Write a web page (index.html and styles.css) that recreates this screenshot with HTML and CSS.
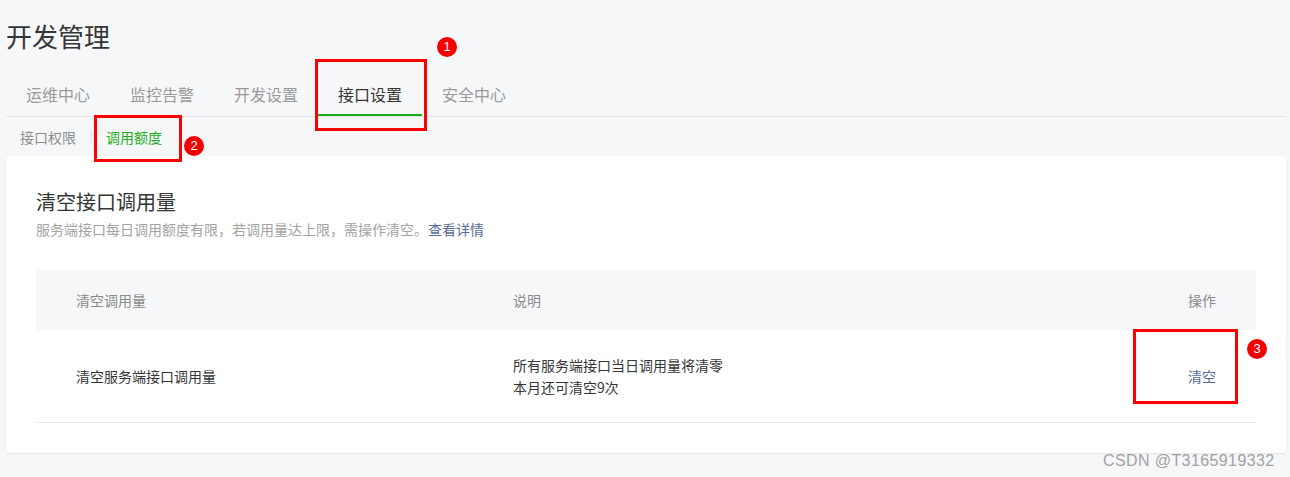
FILE: index.html
```html
<!DOCTYPE html>
<html lang="zh-CN">
<head>
<meta charset="utf-8">
<title>开发管理</title>
<link rel="stylesheet" href="styles.css">
</head>
<body>
<div class="page">
  <h1 class="title">开发管理</h1>
  <nav class="tabs">
    <span class="tab">运维中心</span>
    <span class="tab">监控告警</span>
    <span class="tab">开发设置</span>
    <span class="tab tab-active">接口设置</span>
    <span class="tab">安全中心</span>
  </nav>
  <nav class="subtabs">
    <span class="subtab">接口权限</span>
    <span class="subtab-sep"></span>
    <span class="subtab subtab-active">调用额度</span>
  </nav>
  <section class="card">
    <h2 class="card-title">清空接口调用量</h2>
    <p class="card-desc">服务端接口每日调用额度有限，若调用量达上限，需操作清空。<a class="link" href="#">查看详情</a></p>
    <div class="table">
      <div class="thead">
        <div class="cell c1">清空调用量</div>
        <div class="cell c2">说明</div>
        <div class="cell c3">操作</div>
      </div>
      <div class="trow">
        <div class="cell c1">清空服务端接口调用量</div>
        <div class="cell c2"><div>所有服务端接口当日调用量将清零</div><div>本月还可清空9次</div></div>
        <div class="cell c3"><a class="link" href="#">清空</a></div>
      </div>
    </div>
  </section>

  <div class="mark mark1"></div>
  <div class="badge badge1">1</div>
  <div class="mark mark2"></div>
  <div class="badge badge2">2</div>
  <div class="mark mark3"></div>
  <div class="badge badge3">3</div>
  <div class="watermark">CSDN @T3165919332</div>
</div>
</body>
</html>
```
FILE: styles.css
```css
* { box-sizing: border-box; }
html, body {
  margin: 0;
  padding: 0;
  background: #f6f7f9;
}
body {
  font-family: "Noto Sans CJK SC", "Noto Sans", sans-serif;
  color: #353535;
  width: 1290px;
  height: 477px;
  overflow: hidden;
}
.page {
  position: relative;
  padding: 0 4px 0 6px;
  height: 477px;
}
.title {
  margin: 0;
  padding-top: 18px;
  font-size: 26px;
  line-height: 36px;
  font-weight: 400;
  color: #353535;
}
.tabs {
  margin-top: 20px;
  display: flex;
  border-bottom: 1px solid #e4e5e7;
  height: 43px;
}
.tab {
  padding: 0 20px;
  font-size: 16px;
  line-height: 40px;
  height: 42px;
  color: #9a9a9a;
  border-bottom: 2px solid transparent;
}
.tab-active {
  color: #353535;
  border-bottom-color: #1aad19;
}
.subtabs {
  display: flex;
  align-items: center;
  height: 39px;
  padding-left: 14px;
}
.subtab {
  font-size: 14px;
  line-height: 20px;
  color: #8d8d8d;
}
.subtab-active { color: #1aad19; }
.subtab-sep {
  width: 1px;
  height: 13px;
  background: #e2e2e2;
  margin: 0 14px 0 15px;
}
.card {
  background: #fff;
  border-radius: 4px;
  box-shadow: 0 1px 2px rgba(0,0,0,0.08);
  padding: 32px 30px 30px 30px;
}
.card-title {
  margin: 0;
  font-size: 20px;
  line-height: 28px;
  font-weight: 400;
  color: #353535;
}
.card-desc {
  margin: 3px 0 0 0;
  font-size: 14px;
  line-height: 20px;
  color: #a3a3a3;
}
.link {
  color: #576b95;
  text-decoration: none;
}
.table {
  margin-top: 31px;
  font-size: 14px;
}
.thead, .trow {
  display: grid;
  grid-template-columns: 477px 1fr auto;
  align-items: center;
}
.thead {
  height: 60px;
  background: #f6f7f9;
  color: #8a8a8a;
}
.trow {
  height: 93px;
  border-bottom: 1px solid #e7e7e7;
  color: #353535;
  line-height: 22px;
}
.c1 { padding-left: 40px; }
.c3 { padding-right: 40px; text-align: right; }
.mark {
  position: absolute;
  border: 3px solid #ff0000;
}
.mark1 { left: 315px; top: 59px; width: 112px; height: 72px; }
.mark2 { left: 94px; top: 115px; width: 88px; height: 47px; }
.mark3 { left: 1133px; top: 329px; width: 105px; height: 75px; }
.badge {
  position: absolute;
  width: 20px;
  height: 20px;
  border-radius: 50%;
  background: #f40000;
  color: #fff;
  font-family: "Liberation Sans", Arial, sans-serif;
  font-size: 13px;
  line-height: 20px;
  text-align: center;
}
.badge1 { left: 437px; top: 37px; }
.badge2 { left: 184px; top: 136px; }
.badge3 { left: 1247px; top: 339px; }
.watermark {
  position: absolute;
  left: 1103px;
  top: 451px;
  font-family: "Liberation Sans", Arial, sans-serif;
  font-size: 16px;
  line-height: 20px;
  color: #a2a2a2;
  letter-spacing: 0.4px;
  white-space: nowrap;
}
```
